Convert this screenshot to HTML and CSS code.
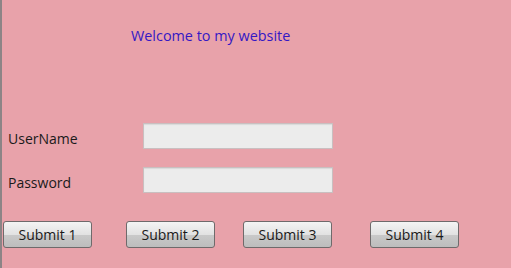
FILE: index.html
```html
<!DOCTYPE html>
<html lang="en">
<head>
    <meta charset="UTF-8">
    <title>Welcome</title>
    <link rel="stylesheet" href="styles.css">
</head>
<body>
    <div class="page">
        <h1 class="welcome">Welcome to my website</h1>

        <form class="login-form">
            <div class="form-row">
                <label class="form-label" for="userName">UserName</label>
                <input type="text" id="userName" class="form-input">
            </div>
            <div class="form-row">
                <label class="form-label" for="password">Password</label>
                <input type="password" id="password" class="form-input">
            </div>

            <div class="button-row">
                <button type="button" class="submit-button first">Submit 1</button>
                <button type="button" class="submit-button second">Submit 2</button>
                <button type="button" class="submit-button third">Submit 3</button>
                <button type="button" class="submit-button">Submit 4</button>
            </div>
        </form>
    </div>
</body>
</html>
```

FILE: styles.css
```css
* {
    margin: 0;
    padding: 0;
    box-sizing: border-box;
}

body {
    font-family: "Open Sans", "Noto Sans", Arial, sans-serif;
    background-color: #e8a2aa;
    color: #1a1a1a;
}

.page {
    min-height: 100vh;
    border-left: 2px solid #8c8486;
    padding: 0 0 0 1px;
}

.welcome {
    font-size: 14.4px;
    font-weight: 400;
    color: #3418c4;
    padding: 26px 0 0 128px;
    line-height: 20px;
}

.login-form {
    padding-top: 77px;
}

.form-row {
    display: flex;
    align-items: center;
    height: 26px;
    margin-bottom: 18px;
}

.form-label {
    width: 140px;
    padding: 5px 0 0 5px;
    font-size: 14px;
}

.form-input {
    width: 190px;
    height: 26px;
    border: 1px solid #c9bfc0;
    background-color: #ececec;
    box-shadow: inset 0 1px 1px rgba(0, 0, 0, 0.08);
}

.button-row {
    display: flex;
    padding-top: 10px;
}

.submit-button {
    width: 89px;
    height: 27px;
    border: 1px solid #6f6a6b;
    border-radius: 3px;
    background: linear-gradient(to bottom, #f4f4f4 0%, #e2e2e2 50%, #c9c9c9 51%, #bdbdbd 100%);
    font-family: inherit;
    font-size: 14px;
    color: #1a1a1a;
}

.submit-button.first {
    margin-right: 34px;
}

.submit-button.second {
    margin-right: 28px;
}

.submit-button.third {
    margin-right: 38px;
}
```
